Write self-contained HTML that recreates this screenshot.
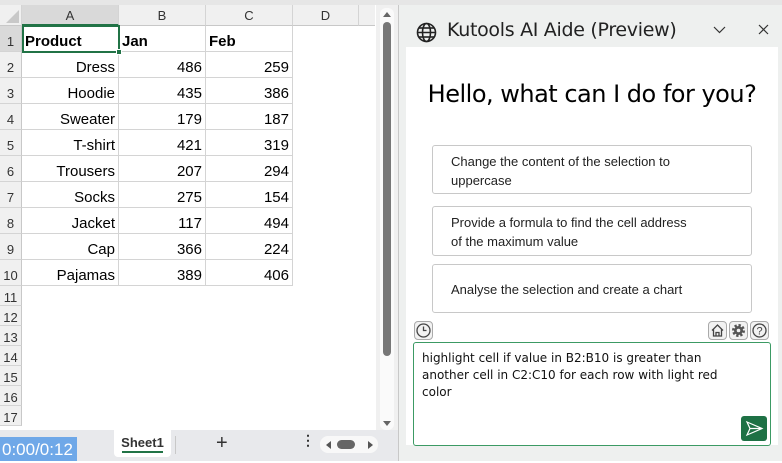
<!DOCTYPE html>
<html><head><style>
*{box-sizing:border-box;margin:0;padding:0}
body{width:782px;height:461px;overflow:hidden;background:#fff;font-family:"Liberation Sans",Arial,sans-serif;position:relative}
.a{position:absolute}
.hc{position:absolute;top:5px;height:21px;background:#f0f0f0;border-right:1px solid #d4d4d4;border-bottom:1px solid #c8c8c8;font-size:13px;color:#333;text-align:center;line-height:21px}
.rh{position:absolute;left:0;width:22px;background:#f0f0f0;border-bottom:1px solid #d4d4d4;border-right:1px solid #c8c8c8;font-size:13px;color:#333;text-align:center}
.c{position:absolute;font-size:15px;color:#000;border-right:1px solid #d4d4d4;border-bottom:1px solid #d4d4d4;text-align:right;padding-right:3px;height:26px;line-height:32px}
.sg{position:absolute;left:432px;width:320px;border:1px solid #c8c8c8;border-radius:3px;font-family:"Liberation Sans","Noto Sans CJK SC",sans-serif;font-size:13px;color:#222;padding-left:18px;line-height:19px}
.ib{position:absolute;top:321px;width:19px;height:19px;border:1px solid #aaa;border-radius:4px;background:#f2f2f2}
</style></head><body>
<div class="a" style="left:0;top:0;width:782px;height:5px;background:#e6e6e6"></div>
<div class="hc" style="left:0;width:22px"></div>
<div class="a" style="left:6px;top:10px;width:0;height:0;border-left:13px solid transparent;border-bottom:13px solid #c8c8c8"></div>
<div class="hc" style="left:22px;width:97px;background:#d9d9d9;border-bottom:2px solid #217346">A</div>
<div class="hc" style="left:119px;width:87px">B</div>
<div class="hc" style="left:206px;width:87px">C</div>
<div class="hc" style="left:293px;width:66px">D</div>
<div class="hc" style="left:359px;width:16px;border-right:none"></div>
<div id="g"></div>
<script>
var d=[["Product","Jan","Feb"],["Dress",486,259],["Hoodie",435,386],["Sweater",179,187],["T-shirt",421,319],["Trousers",207,294],["Socks",275,154],["Jacket",117,494],["Cap",366,224],["Pajamas",389,406]];
var h="";
for(var i=0;i<10;i++){var y=26+i*26;
h+='<div class="rh" style="top:'+y+'px;height:26px;line-height:31px;'+(i==0?'background:#d9d9d9':'')+'">'+(i+1)+'</div>';
var L=[22,119,206],W=[97,87,87];
for(var j=0;j<3;j++){var b=i==0;h+='<div class="c" style="left:'+L[j]+'px;top:'+y+'px;width:'+W[j]+'px;'+(b?'font-weight:bold;text-align:left;padding-left:3px;':'')+'">'+d[i][j]+'</div>';}}
for(var k=0;k<7;k++){var y=286+k*20;h+='<div class="rh" style="top:'+y+'px;height:20px;line-height:23px">'+(11+k)+'</div>';}
document.getElementById("g").innerHTML=h;
</script>
<div class="a" style="left:22px;top:25px;width:98px;height:28px;border:2px solid #217346"></div>
<div class="a" style="left:116px;top:49px;width:6px;height:6px;background:#217346;border:1px solid #fff"></div>
<div class="a" style="left:376px;top:5px;width:22px;height:426px;background:#f0f0f0"></div>
<div class="a" style="left:380px;top:8px;width:14px;height:422px;background:#fafafa;border-radius:6px"></div>
<div class="a" style="left:383px;top:12px;border-left:4px solid transparent;border-right:4px solid transparent;border-bottom:5px solid #666"></div>
<div class="a" style="left:383px;top:22px;width:8px;height:334px;background:#777;border-radius:4px"></div>
<div class="a" style="left:383px;top:421px;border-left:4px solid transparent;border-right:4px solid transparent;border-top:5px solid #666"></div>
<div class="a" style="left:0;top:430px;width:398px;height:31px;background:#e8e9ec"></div>
<div class="a" style="left:114px;top:430px;width:57px;height:27px;background:#fff;border-radius:0 0 4px 4px;font-size:13px;font-weight:bold;color:#333;text-align:center;line-height:26px">Sheet1</div>
<div class="a" style="left:122px;top:451px;width:41px;height:2px;background:#217346"></div>
<div class="a" style="left:175px;top:436px;width:1px;height:18px;background:#c8c8c8"></div>
<div class="a" style="left:216px;top:432px;font-size:20px;color:#333">+</div>
<div class="a" style="left:301px;top:432px;font-size:14px;color:#333;font-weight:bold">⋮</div>
<div class="a" style="left:320px;top:436px;width:58px;height:17px;background:#f8f8f8;border-radius:8px"></div>
<div class="a" style="left:326px;top:441px;border-top:4px solid transparent;border-bottom:4px solid transparent;border-right:5px solid #555"></div>
<div class="a" style="left:337px;top:440px;width:18px;height:9px;background:#666;border-radius:5px"></div>
<div class="a" style="left:368px;top:441px;border-top:4px solid transparent;border-bottom:4px solid transparent;border-left:5px solid #555"></div>
<div class="a" style="left:0;top:437px;width:77px;height:24px;background:#6fa8e8;color:#fff;font-size:17px;line-height:26px;padding-left:2px">0:00/0:12</div>
<div class="a" style="left:398px;top:5px;width:384px;height:456px;background:#eef0ef;border-left:1px solid #c8c8c8"></div>
<svg class="a" style="left:416px;top:22px" width="21" height="21" viewBox="0 0 21 21" fill="none" stroke="#222" stroke-width="1.6"><circle cx="10.5" cy="10.5" r="9"/><ellipse cx="10.5" cy="10.5" rx="4" ry="9"/><line x1="1.5" y1="10.5" x2="19.5" y2="10.5"/><line x1="3" y1="6" x2="18" y2="6"/><line x1="3" y1="15" x2="18" y2="15"/></svg>
<div class="a" style="left:447px;top:19px;font-family:'DejaVu Sans',sans-serif;font-size:19px;color:#222;letter-spacing:-0.3px">Kutools AI Aide (Preview)</div>
<svg class="a" style="left:713px;top:26px" width="13" height="8"><polyline points="1,1 6.5,6.5 12,1" fill="none" stroke="#333" stroke-width="1.2"/></svg>
<svg class="a" style="left:758px;top:24px" width="11" height="11"><path d="M1 1L10 10M10 1L1 10" stroke="#333" stroke-width="1.2"/></svg>
<div class="a" style="left:406px;top:47px;width:372px;height:398px;background:#fff"></div>
<div class="a" style="left:406px;top:80px;width:372px;text-align:center;font-family:'DejaVu Sans',sans-serif;font-size:24px;color:#000;letter-spacing:-0.5px">Hello, what can I do for you?</div>
<div class="sg" style="top:145px;height:49px;padding-top:6px">Change the content of the selection to<br>uppercase</div>
<div class="sg" style="top:206px;height:50px;padding-top:6px">Provide a formula to find the cell address<br>of the maximum value</div>
<div class="sg" style="top:264px;height:49px;padding-top:15px">Analyse the selection and create a chart</div>
<div class="ib" style="left:414px"><svg width="17" height="17" style="position:absolute;left:0;top:0"><circle cx="8.5" cy="8.5" r="6.5" fill="none" stroke="#444" stroke-width="1.3"/><path d="M8.5 4.5V8.5H11.5" fill="none" stroke="#444" stroke-width="1.3"/></svg></div>
<div class="ib" style="left:708px"><svg width="17" height="17" style="position:absolute;left:0;top:0"><path d="M3 8.5L8.5 3L14 8.5M4.5 7V14H12.5V7M7 14V10.5H10V14" fill="none" stroke="#444" stroke-width="1.3"/></svg></div>
<div class="ib" style="left:729px"><svg width="17" height="17" style="position:absolute;left:0;top:0"><circle cx="8.5" cy="8.5" r="5" fill="none" stroke="#555" stroke-width="3" stroke-dasharray="2.2 1.7"/><circle cx="8.5" cy="8.5" r="4.5" fill="#555"/><circle cx="8.5" cy="8.5" r="1.8" fill="#f2f2f2"/></svg></div>
<div class="ib" style="left:750px"><svg width="17" height="17" style="position:absolute;left:0;top:0"><circle cx="8.5" cy="8.5" r="6.5" fill="none" stroke="#444" stroke-width="1.3"/><text x="8.5" y="12.5" font-size="11" text-anchor="middle" fill="#444" font-family="Liberation Sans">?</text></svg></div>
<div class="a" style="left:413px;top:342px;width:358px;height:104px;border:1px solid #3c9a64;border-radius:3px;padding:7px 0 0 8px;font-family:'DejaVu Sans',sans-serif;font-size:12px;line-height:17px;color:#111">highlight cell if value in B2:B10 is greater than<br>another cell in C2:C10 for each row with light red<br>color</div>
<div class="a" style="left:741px;top:416px;width:26px;height:25px;background:#1e7145;border-radius:3px"><svg width="26" height="25"><path d="M6 6L21 12.5L6 19L9 12.5Z M9 12.5H21" fill="none" stroke="#fff" stroke-width="1.2"/></svg></div>
</body></html>
